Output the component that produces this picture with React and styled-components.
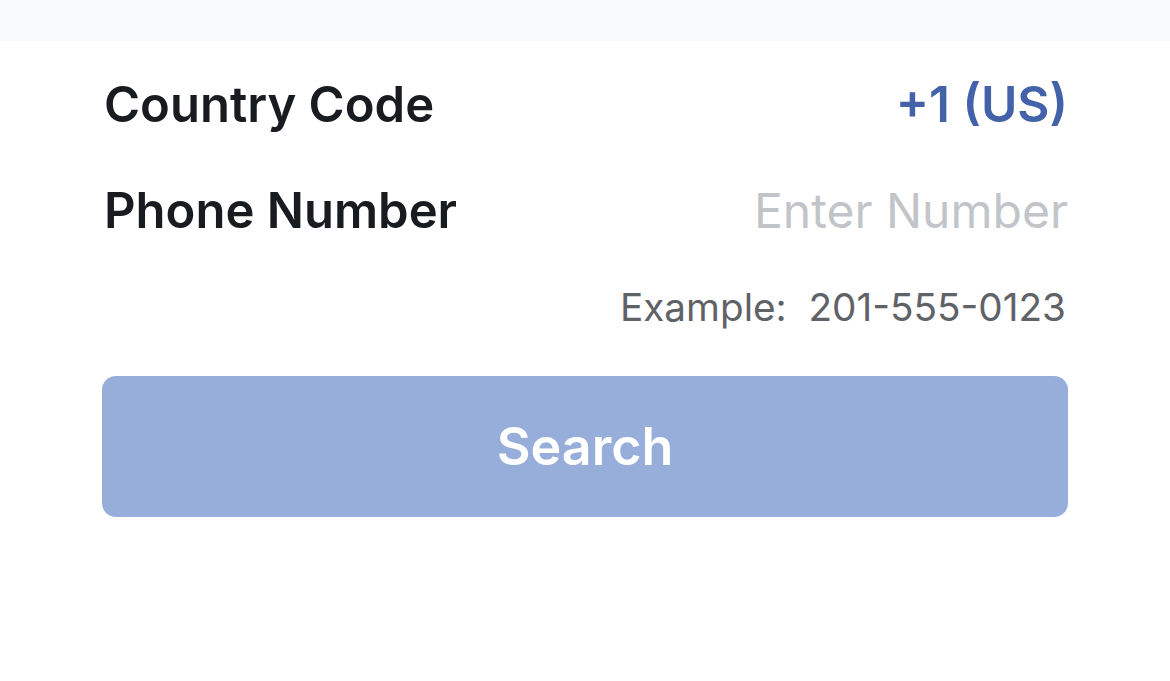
import React from "react";
import styled, { createGlobalStyle } from "styled-components";

const Global = createGlobalStyle`
  html, body { margin: 0; padding: 0; background: #ffffff; }
  body { font-family: Inter, "Noto Sans", "Liberation Sans", sans-serif; -webkit-font-smoothing: antialiased; }
`;

const Page = styled.div`
  width: 1170px;
  height: 681px;
  background: #ffffff;
  display: flex;
  flex-direction: column;
`;

const TopBar = styled.div`
  height: 41px;
  background: #f9fafb;
  flex-shrink: 0;
`;

const Form = styled.div`
  display: flex;
  flex-direction: column;
  padding: 0 102px;
`;

const Row = styled.div`
  display: flex;
  align-items: center;
  justify-content: space-between;
  height: ${(p) => p.$h}px;
`;

const Label = styled.div`
  font-size: 49px;
  font-weight: 600;
  color: #181b1f;
  padding-left: 2px;
`;

const Value = styled.div`
  font-size: 49.5px;
  font-weight: 600;
  color: #4462aa;
  padding-right: 0;
`;

const Input = styled.input`
  border: none;
  outline: none;
  background: transparent;
  text-align: right;
  font-family: inherit;
  font-size: 48px;
  font-weight: 400;
  color: #181b1f;
  width: 440px;
  padding: 0;
  &::placeholder { color: #c1c5ca; }
`;

const Hint = styled.div`
  font-size: 38.7px;
  color: #5f6368;
  text-align: right;
  padding-right: 2px;
  white-space: pre;
  height: 108px;
  line-height: 108px;
`;

const Button = styled.button`
  margin-top: 15px;
  height: 141px;
  border: none;
  border-radius: 14px;
  background: #96aed9;
  color: #ffffff;
  font-family: inherit;
  font-size: 52px;
  font-weight: 600;
  cursor: pointer;
`;

export default function App() {
  return (
    <Page>
      <Global />
      <TopBar />
      <Form>
        <Row $h={126}>
          <Label>Country Code</Label>
          <Value>+1 (US)</Value>
        </Row>
        <Row $h={86}>
          <Label>Phone Number</Label>
          <Input placeholder="Enter Number" />
        </Row>
        <Hint>{"Example:  201-555-0123"}</Hint>
        <Button>Search</Button>
      </Form>
    </Page>
  );
}
